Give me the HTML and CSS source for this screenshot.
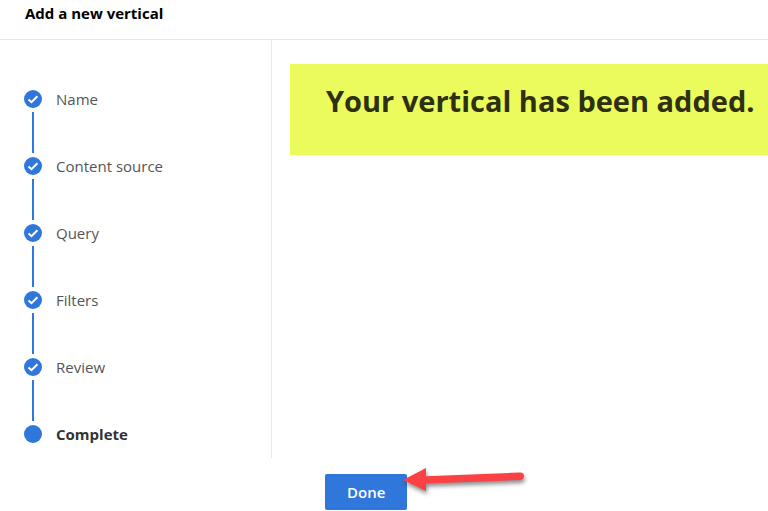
FILE: index.html
```html
<!DOCTYPE html>
<html lang="en">
<head>
<meta charset="utf-8">
<meta name="viewport" content="width=device-width, initial-scale=1">
<title>Add a new vertical</title>
<link rel="stylesheet" href="styles.css">
</head>
<body>
<header class="header"><h1 class="title">Add a new vertical</h1></header>
<div class="wizard">
  <nav class="sidebar" aria-label="Progress">
    <ol class="steps">
      <li class="step"><svg class="dot" viewBox="0 0 18 18" aria-hidden="true"><circle cx="9" cy="9" r="9"/><path d="M4.5 9.4 7.5 12.2 13.4 6.2"/></svg><span class="label">Name</span></li>
      <li class="step"><svg class="dot" viewBox="0 0 18 18" aria-hidden="true"><circle cx="9" cy="9" r="9"/><path d="M4.5 9.4 7.5 12.2 13.4 6.2"/></svg><span class="label">Content source</span></li>
      <li class="step"><svg class="dot" viewBox="0 0 18 18" aria-hidden="true"><circle cx="9" cy="9" r="9"/><path d="M4.5 9.4 7.5 12.2 13.4 6.2"/></svg><span class="label">Query</span></li>
      <li class="step"><svg class="dot" viewBox="0 0 18 18" aria-hidden="true"><circle cx="9" cy="9" r="9"/><path d="M4.5 9.4 7.5 12.2 13.4 6.2"/></svg><span class="label">Filters</span></li>
      <li class="step"><svg class="dot" viewBox="0 0 18 18" aria-hidden="true"><circle cx="9" cy="9" r="9"/><path d="M4.5 9.4 7.5 12.2 13.4 6.2"/></svg><span class="label">Review</span></li>
      <li class="step current" aria-current="step"><svg class="dot" viewBox="0 0 18 18" aria-hidden="true"><circle cx="9" cy="9" r="9"/></svg><span class="label">Complete</span></li>
    </ol>
  </nav>
  <main class="content">
    <div class="banner"><h2 class="message">Your vertical has been added.</h2></div>
  </main>
</div>
<footer class="footer">
  <div class="action">
    <button class="done" type="button">Done</button>
    <svg class="arrow" viewBox="0 0 130 36" aria-hidden="true">
      <path d="M2 16 25 4V12.300L119 8.500Q123 8.700 123 12Q123 15.500 119 16L25 19.500V27Z"/>
    </svg>
  </div>
</footer>
</body>
</html>
```
FILE: styles.css
```css
* {
  box-sizing: border-box;
}

body {
  margin: 0;
  background: #fff;
  color: #555;
  font-family: "Open Sans", "Noto Sans", sans-serif;
  font-size: 15px;
  overflow: hidden;
}

.header {
  padding: 3px 25px 16px;
  border-bottom: 1px solid #e8e8e8;
}

.title {
  margin: 0;
  color: #000;
  font-size: 15px;
  font-weight: 700;
  line-height: 20px;
}

.wizard {
  display: grid;
  grid-template-columns: 272px 1fr;
}

.sidebar {
  padding: 50px 24px 15px;
  border-right: 1px solid #e8e8e8;
}

.steps {
  margin: 0;
  padding: 0;
  list-style: none;
}

.step {
  display: grid;
  grid-template-columns: 18px 1fr;
  column-gap: 14px;
  align-items: center;
}

.step::after {
  content: "";
  width: 2px;
  height: 41px;
  margin: 4px 0;
  justify-self: center;
  background: #3077dc;
}

.current::after {
  display: none;
}

.dot {
  width: 18px;
  height: 18px;
  fill: #3077dc;
}

.dot path {
  fill: none;
  stroke: #fff;
  stroke-width: 2;
}

.label {
  line-height: 18px;
}

.current .label {
  color: #333;
  font-weight: 700;
}

.content {
  min-width: 0;
  padding: 24px 0 0 18px;
}

.banner {
  padding: 17px 0 34px 36px;
  background: #ecfb5c;
}

.message {
  margin: 0;
  color: #2e3012;
  font-size: 29px;
  font-weight: 700;
  line-height: 40px;
  white-space: nowrap;
}

.footer {
  padding: 16px 24px 0 325px;
}

.action {
  position: relative;
  display: inline-block;
}

.done {
  display: block;
  padding: 8px 22px;
  border: 0;
  border-radius: 2px;
  background: #3077dc;
  color: #fff;
  font: 600 15px/20px "Open Sans", "Noto Sans", sans-serif;
}

.arrow {
  position: absolute;
  top: -10px;
  left: 76px;
  width: 130px;
  height: 36px;
  fill: #fb4144;
  filter: drop-shadow(1px 3px 2px rgb(0 0 0 / 45%));
}
```
